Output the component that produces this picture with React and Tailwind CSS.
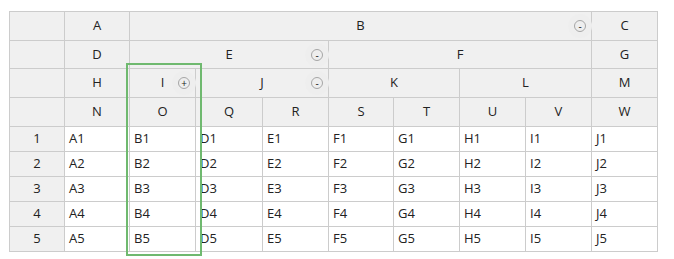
import React from 'react';

const headerRows = [
  [{ label: '' }, { label: 'A' }, { label: 'B', span: 'col-span-7', btn: '-' }, { label: 'C' }],
  [{ label: '' }, { label: 'D' }, { label: 'E', span: 'col-span-3', btn: '-' }, { label: 'F', span: 'col-span-4' }, { label: 'G' }],
  [
    { label: '' },
    { label: 'H' },
    { label: 'I', btn: '+' },
    { label: 'J', span: 'col-span-2', btn: '-' },
    { label: 'K', span: 'col-span-2' },
    { label: 'L', span: 'col-span-2' },
    { label: 'M' },
  ],
  ['', 'N', 'O', 'Q', 'R', 'S', 'T', 'U', 'V', 'W'].map((label) => ({ label })),
];

const dataCols = ['A', 'B', 'D', 'E', 'F', 'G', 'H', 'I', 'J'];
const rows = [1, 2, 3, 4, 5];

const Toggle = ({ sign }) => (
  <span className="absolute right-[5px] top-1/2 -translate-y-1/2 flex items-center justify-center w-[12px] h-[12px] rounded-full border border-[#a6a6a6] bg-[#eeeeee] shadow-[0_0_0_6px_#eeeeee] text-[10px] leading-none text-[#222]">
    {sign}
  </span>
);

export default function App() {
  return (
    <div
      className="min-h-screen bg-white pl-[9px] pt-[11px] text-[13px] text-[#222]"
      style={{ fontFamily: '"Open Sans", "Noto Sans", sans-serif' }}
    >
      <div className="relative w-fit">
        <div className="grid grid-cols-[54px_64px_65px_66px_65px_64px_65px_65px_65px_65px] grid-rows-[28px_27px_28px_28px_24px_24px_24px_24px_24px] gap-px p-px bg-[#cccccc]">
          {/* Nested headers */}
          {headerRows.map((row, ri) =>
            row.map((cell, ci) => (
              <div
                key={`h-${ri}-${ci}`}
                className={`relative flex items-center justify-center bg-[#f0f0f0] ${cell.span || ''}`}
              >
                {cell.label}
                {cell.btn && <Toggle sign={cell.btn} />}
              </div>
            ))
          )}

          {/* Body */}
          {rows.map((r) => (
            <React.Fragment key={r}>
              <div className="flex items-center justify-center bg-[#f0f0f0]">{r}</div>
              {dataCols.map((c) => (
                <div key={c} className="flex items-center bg-white px-1">
                  {c}
                  {r}
                </div>
              ))}
            </React.Fragment>
          ))}
        </div>

        {/* Selection outline */}
        <div className="pointer-events-none absolute left-[117px] top-[52px] w-[76px] h-[193px] border-2 border-[#6fb96f]" />
      </div>
    </div>
  );
}
